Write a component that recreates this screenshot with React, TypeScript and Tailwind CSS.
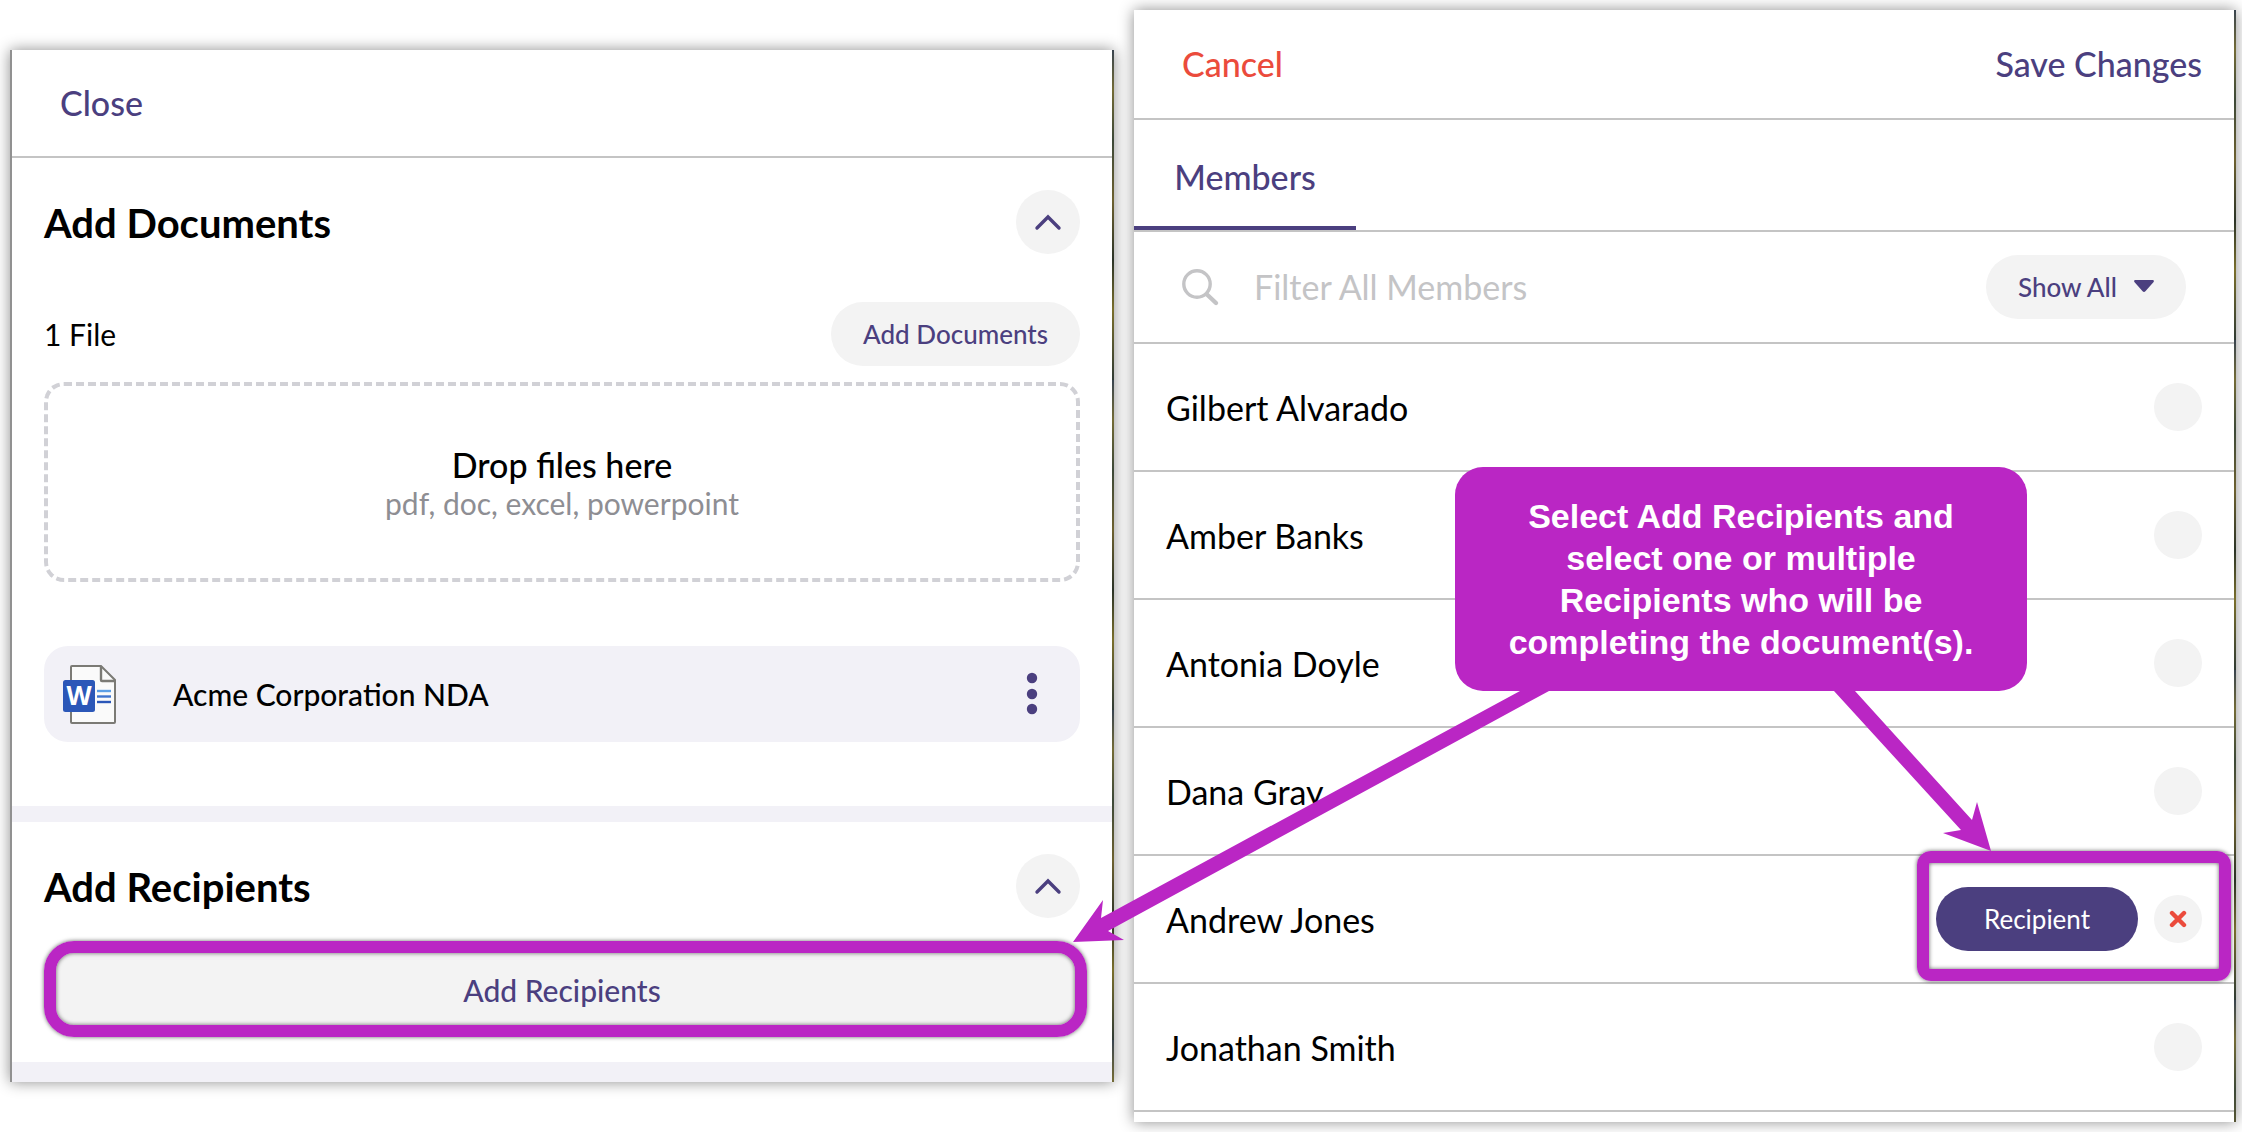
import { useState } from 'react'
import type { ReactNode } from 'react'

type Member = { id: number; name: string; recipient?: boolean }

const initialMembers: Member[] = [
  { id: 1, name: 'Gilbert Alvarado' },
  { id: 2, name: 'Amber Banks' },
  { id: 3, name: 'Antonia Doyle' },
  { id: 4, name: 'Dana Gray' },
  { id: 5, name: 'Andrew Jones', recipient: true },
  { id: 6, name: 'Jonathan Smith' },
]

function ChevronUp() {
  return (
    <svg width="28" height="18" viewBox="0 0 28 18" fill="none" aria-hidden="true">
      <path d="M3 15 14 4l11 11" stroke="#4b3f7f" strokeWidth="3.4" strokeLinecap="round" />
    </svg>
  )
}

function SearchIcon() {
  return (
    <svg className="h-10 w-10 shrink-0" viewBox="0 0 40 40" fill="none" stroke="#c4c4c6" aria-hidden="true">
      <circle cx="15" cy="17" r="13.2" strokeWidth="3.4" />
      <path d="M25 27.500 34 36" strokeWidth="4.4" strokeLinecap="round" />
    </svg>
  )
}

function WordIcon() {
  return (
    <svg width="57" height="64" viewBox="0 0 57 64" aria-hidden="true">
      <path d="M12 4h29l14 14v42a1 1 0 0 1-1 1H12a1 1 0 0 1-1-1V5a1 1 0 0 1 1-1Z" fill="#fafafa" stroke="#7b7a75" strokeWidth="2" />
      <path d="M41 4v14a1 1 0 0 0 1 1h13" fill="none" stroke="#7b7a75" strokeWidth="2.4" />
      <path d="M37 29h14" stroke="#5c9fe6" strokeWidth="2.4" />
      <path d="M37 34.500h14" stroke="#3f74cf" strokeWidth="2.4" />
      <path d="M37 40h14" stroke="#2b57b8" strokeWidth="2.4" />
      <rect x="3" y="18" width="32" height="32" rx="2.500" fill="#2b57b8" />
      <text x="19" y="43" textAnchor="middle" fill="#fff" fontFamily="Noto Sans, sans-serif" fontWeight="700" fontSize="26">
        W
      </text>
    </svg>
  )
}

// thin sliver of the page behind that shows at the panel's right edge
function PanelEdge() {
  return (
    <div className="w-0.5 shrink-0 bg-[repeating-linear-gradient(#39444f_0px,#736b36_40px,#3c4838_90px,#6d6130_150px,#2b3327_210px,#7a6f2c_260px,#2f3a33_330px)]" />
  )
}

function Panel({ children, edge = '' }: { children: ReactNode; edge?: string }) {
  return (
    <div className={`flex min-w-0 flex-1 bg-white shadow-[0_0_14px_rgba(0,0,0,0.45)] ${edge}`}>
      <div className="min-w-0 flex-1">{children}</div>
      <PanelEdge />
    </div>
  )
}

function SectionHeading({ title }: { title: string }) {
  const [open, setOpen] = useState(true)
  return (
    <div className="flex items-center justify-between">
      <h2 className="pt-0.5 text-[40px] leading-12 font-bold">{title}</h2>
      <button
        type="button"
        aria-label={`Collapse ${title}`}
        aria-expanded={open}
        onClick={() => setOpen(!open)}
        className="flex h-16 w-16 items-center justify-center rounded-full bg-[#f3f3f3]"
      >
        <ChevronUp />
      </button>
    </div>
  )
}

function DocumentsPanel() {
  return (
    <Panel edge="border-l-2 border-[#919191]">
      <header className="flex h-27 items-center border-b-2 border-[#c4c4c4] px-12">
        <button type="button" className="text-[34px] leading-10 font-medium text-[#4b3f7f]">
          Close
        </button>
      </header>

      <section className="px-8 pt-8 pb-16">
        <SectionHeading title="Add Documents" />
        <div className="mt-12 flex items-center justify-between">
          <p className="text-[30px] leading-9">1 File</p>
          <button type="button" className="h-16 rounded-full bg-[#f3f3f3] px-8 text-[26px] leading-8 font-medium text-[#4b3f7f]">
            Add Documents
          </button>
        </div>
        <div className="mt-4 flex h-50 flex-col items-center justify-center rounded-[20px] border-4 border-dashed border-[#d1d1d6] pt-0.5">
          <p className="text-[34px] leading-10 font-medium">Drop files here</p>
          <p className="text-[30px] leading-9 text-[#8e8e93]">pdf, doc, excel, powerpoint</p>
        </div>
        <div className="mt-16 flex h-24 items-center rounded-3xl bg-[#f2f1f7] pr-8 pl-4">
          <WordIcon />
          <p className="ml-14 flex-1 text-[30px] leading-9 font-medium">Acme Corporation NDA</p>
          <button type="button" aria-label="File options" className="flex w-8 justify-center">
            <svg width="12" height="44" viewBox="0 0 12 44" fill="#4b3f7f" aria-hidden="true">
              <circle cx="6" cy="6" r="5.200" />
              <circle cx="6" cy="22" r="5.200" />
              <circle cx="6" cy="37" r="5.200" />
            </svg>
          </button>
        </div>
      </section>

      <div className="h-4 bg-[#f2f1f7]" />

      <section className="px-8 py-8">
        <SectionHeading title="Add Recipients" />
        <div className="relative mt-8">
          <button type="button" className="block h-20 w-full rounded-3xl bg-[#f3f3f3] text-[30px] leading-9 font-medium text-[#4b3f7f]">
            Add Recipients
          </button>
          <div className="pointer-events-none absolute -top-[9px] -right-[7px] -bottom-[7px] left-0 rounded-[30px] border-12 border-[#ba26c4] shadow-[0_0_4px_rgba(0,0,0,0.6),inset_0_0_4px_rgba(0,0,0,0.6)]" />
        </div>
      </section>

      <div className="h-5 bg-[#f2f1f7]" />
    </Panel>
  )
}

function MemberRow({ member, onToggle }: { member: Member; onToggle: () => void }) {
  return (
    <li className="relative flex h-32 items-center justify-between border-b-2 border-[#c4c4c4] px-8">
      <label htmlFor={`member-${member.id}`} className="pt-0.5 text-[34px] leading-10">
        {member.name}
      </label>
      {member.recipient ? (
        <div className="flex items-center gap-4">
          <button type="button" id={`member-${member.id}`} className="h-16 rounded-full bg-[#4b3f7f] px-12 text-[26px] leading-8 text-white">
            Recipient
          </button>
          <button
            type="button"
            aria-label={`Remove ${member.name}`}
            onClick={onToggle}
            className="flex h-12 w-12 items-center justify-center rounded-full bg-[#f3f3f3]"
          >
            <svg width="18" height="18" viewBox="0 0 18 18" fill="none" aria-hidden="true">
              <path d="m3 3 12 12M15 3 3 15" stroke="#eb4b3c" strokeWidth="4.400" strokeLinecap="round" />
            </svg>
          </button>
          <div className="pointer-events-none absolute -top-[5px] right-[3px] bottom-px w-[314px] rounded-[14px] border-12 border-[#ba26c4] shadow-[0_0_4px_rgba(0,0,0,0.6),inset_0_0_4px_rgba(0,0,0,0.6)]" />
        </div>
      ) : (
        <input
          type="checkbox"
          id={`member-${member.id}`}
          checked={false}
          onChange={onToggle}
          className="h-12 w-12 appearance-none rounded-full bg-[#f3f3f3]"
        />
      )}
    </li>
  )
}

function MembersPanel() {
  const [members, setMembers] = useState(initialMembers)

  const toggle = (id: number) => {
    setMembers((list) => list.map((m) => (m.id === id ? { ...m, recipient: !m.recipient } : m)))
  }

  return (
    <Panel>
      <header className="flex h-[110px] items-center justify-between border-b-2 border-[#c4c4c4] pr-8 pl-12 text-[34px] leading-10 font-medium">
        <button type="button" className="text-[#eb4b3c]">
          Cancel
        </button>
        <button type="button" className="text-[#4b3f7f]">
          Save Changes
        </button>
      </header>

      <div role="tablist" className="flex h-28 border-b-2 border-[#c4c4c4]">
        <button
          type="button"
          role="tab"
          aria-selected="true"
          className="w-[222px] border-b-4 border-[#4b3f7f] pt-2 text-[34px] leading-10 font-medium text-[#4b3f7f]"
        >
          Members
        </button>
      </div>

      <div className="flex h-28 items-center border-b-2 border-[#c4c4c4] px-12">
        <SearchIcon />
        <input
          type="text"
          aria-label="Filter All Members"
          placeholder="Filter All Members"
          className="ml-8 min-w-0 flex-1 text-[34px] leading-10 outline-none placeholder:text-[#c4c4c6]"
        />
        <div className="relative">
          <select
            aria-label="Member filter"
            className="h-16 w-50 appearance-none rounded-full bg-[#f3f3f3] pl-8 text-[26px] leading-8 font-medium text-[#4b3f7f]"
          >
            <option>Show All</option>
            <option>Selected</option>
          </select>
          <svg className="pointer-events-none absolute top-6 right-8" width="20" height="14" viewBox="0 0 20 14" fill="#4b3f7f" aria-hidden="true">
            <path d="M1.500 1h17c1.400 0 1.800 1.300.9 2.300l-8 9c-.8.900-2 .9-2.800 0l-8-9C-.300 2.300.1 1 1.500 1Z" />
          </svg>
        </div>
      </div>

      <ul className="pb-2.5">
        {members.map((m) => (
          <MemberRow key={m.id} member={m} onToggle={() => toggle(m.id)} />
        ))}
      </ul>
    </Panel>
  )
}

function Callout() {
  return (
    <>
      <svg
        className="pointer-events-none absolute top-[681px] right-0 overflow-visible"
        width="1163"
        height="260"
        viewBox="1073 691 1163 260"
        fill="#ba26c4"
        aria-hidden="true"
      >
        <path d="M1073 942 1103 900 1101 918 1520 691V685H1560L1549 691 1108 931 1124 940Z" />
        <path d="M1991 851 1977 802 1972 820 1855 691V685H1830L1834 691 1961 830 1943 833Z" />
      </svg>
      <div className="absolute top-[457px] right-[209px] w-[572px] rounded-[28px] bg-[#ba26c4] px-12 py-7 text-center font-['Liberation_Sans',Arial,sans-serif] text-[34px] leading-[42px] font-bold text-white">
        Select Add Recipients and
        <br />
        select one or multiple
        <br />
        Recipients who will be
        <br />
        completing the document(s).
      </div>
    </>
  )
}

export default function App() {
  return (
    <main className="flex items-start gap-5 bg-white pt-2.5 pr-1.5 pb-2.5 pl-2.5 font-[Lato,'Open_Sans',sans-serif] text-black">
      <div className="flex min-w-0 flex-[552] pt-10">
        <DocumentsPanel />
      </div>
      <div className="relative flex min-w-0 flex-[551]">
        <MembersPanel />
        <Callout />
      </div>
    </main>
  )
}
